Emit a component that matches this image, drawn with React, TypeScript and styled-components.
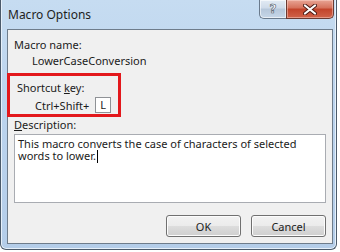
import React from "react";
import styled, { createGlobalStyle } from "styled-components";

const GlobalStyle = createGlobalStyle`
  html, body {
    margin: 0;
    padding: 0;
    background: #ffffff;
  }
  body {
    width: 340px;
    height: 252px;
    overflow: hidden;
    font-family: "Noto Sans", "Open Sans", sans-serif;
    font-size: 11px;
    color: #1b1b1b;
  }
`;

const App = () => {
  return (
    <>
      <GlobalStyle />
      <Frame>
        <TitleBar>
          <Title>Macro Options</Title>
          <CaptionButtons>
            <HelpBtn aria-label="Help">?</HelpBtn>
            <CloseBtn aria-label="Close">
              <svg width="14" height="11" viewBox="0 0 14 11">
                <path
                  d="M2 1.5 L12 9.5 M12 1.5 L2 9.5"
                  stroke="#4a1a14"
                  strokeWidth="4"
                  strokeLinecap="round"
                />
                <path
                  d="M2 1.5 L12 9.5 M12 1.5 L2 9.5"
                  stroke="#ffffff"
                  strokeWidth="2.2"
                  strokeLinecap="round"
                />
              </svg>
            </CloseBtn>
          </CaptionButtons>
        </TitleBar>
        <Client>
          <Label>Macro name:</Label>
          <Value>LowerCaseConversion</Value>
          <Highlight>
            <Label>
              Shortcut <u>k</u>ey:
            </Label>
            <KeyRow>
              <span>Ctrl+Shift+</span>
              <KeyInput>L</KeyInput>
            </KeyRow>
          </Highlight>
          <DescLabel>
            <u>D</u>escription:
          </DescLabel>
          <DescBox>
            This macro converts the case of characters of selected words to
            lower.<Caret />
          </DescBox>
          <ButtonRow>
            <DialogButton>OK</DialogButton>
            <DialogButton>Cancel</DialogButton>
          </ButtonRow>
        </Client>
      </Frame>
    </>
  );
};

/** Window styles */
const Frame = styled.div`
  width: 337px;
  height: 250px;
  box-sizing: border-box;
  padding: 0 3px 5px 6px;
  display: flex;
  flex-direction: column;
  background: linear-gradient(#c6dcf1, #bcd4ee 40%, #b4cde9);
  border: 1px solid #4b5a6b;
  border-top: none;
  border-radius: 0 0 6px 6px;
  box-shadow: inset 1px 0 0 #e6f0fa, inset -1px 0 0 #e6f0fa,
    inset 0 -1px 0 #e6f0fa;
`;

const TitleBar = styled.div`
  height: 29px;
  display: flex;
  align-items: flex-start;
  justify-content: space-between;
`;

const Title = styled.div`
  margin-top: 7px;
  margin-left: 1px;
  font-size: 12px;
  line-height: 16px;
  color: #1e1e1e;
`;

const CaptionButtons = styled.div`
  display: flex;
  height: 19px;
  margin-right: -1px;
`;

const HelpBtn = styled.div`
  width: 27px;
  height: 19px;
  box-sizing: border-box;
  border: 1px solid #6a7a8c;
  border-top: none;
  border-right: none;
  border-radius: 0 0 0 5px;
  background: linear-gradient(#e3ebf4, #cfdbe9 45%, #b6c7da 50%, #c6d6e8);
  box-shadow: inset 0 0 0 1px rgba(255, 255, 255, 0.6);
  display: flex;
  align-items: center;
  justify-content: center;
  font-family: "DejaVu Sans", sans-serif;
  font-weight: bold;
  font-size: 12px;
  color: #ffffff;
  -webkit-text-stroke: 0.6px #4c5866;
`;

const CloseBtn = styled.div`
  width: 48px;
  height: 19px;
  box-sizing: border-box;
  border: 1px solid #6a3a32;
  border-top: none;
  border-radius: 0 0 5px 0;
  background: linear-gradient(#e8a595, #d5705a 45%, #c2432a 50%, #d0634a);
  box-shadow: inset 0 0 0 1px rgba(255, 220, 210, 0.45);
  display: flex;
  align-items: center;
  justify-content: center;
`;

const Client = styled.div`
  flex: 1;
  display: flex;
  flex-direction: column;
  background: #f0f0f0;
  border: 1px solid #6e7c8b;
  padding: 0 6px 0 6px;
`;

/** Content styles */
const Label = styled.div`
  line-height: 15px;
  margin-top: 7px;
`;

const Value = styled.div`
  line-height: 15px;
  margin: 0 0 0 18px;
  height: 20px;
  padding-top: 1px;
`;

const Highlight = styled.div`
  width: 114px;
  height: 44px;
  box-sizing: border-box;
  margin-left: -7px;
  padding: 0 0 0 6px;
  border: 3px solid #e3181c;
  display: flex;
  flex-direction: column;

  ${Label} {
    margin-top: 4px;
    margin-left: 1px;
  }
`;

const KeyRow = styled.div`
  display: flex;
  align-items: center;
  gap: 6px;
  margin: 2px 0 0 19px;
  line-height: 15px;
`;

const KeyInput = styled.div`
  width: 16px;
  height: 16px;
  box-sizing: border-box;
  border: 1px solid #8f9296;
  background: #ffffff;
  padding-left: 4px;
  line-height: 14px;
`;

const DescLabel = styled.div`
  line-height: 15px;
  margin-top: 0;
  height: 17px;
`;

const DescBox = styled.div`
  height: 69px;
  box-sizing: border-box;
  border: 1px solid #a9acb2;
  background: #ffffff;
  padding: 3px 3px;
  line-height: 12px;
  width: 312px;
`;

const Caret = styled.span`
  display: inline-block;
  width: 1px;
  height: 13px;
  background: #000000;
  vertical-align: -3px;
  margin-left: 1px;
`;

const ButtonRow = styled.div`
  display: flex;
  justify-content: flex-end;
  gap: 10px;
  margin-top: 12px;
  padding-right: 0;
`;

const DialogButton = styled.div`
  width: 75px;
  height: 22px;
  box-sizing: border-box;
  border: 1px solid #707070;
  border-radius: 3px;
  background: linear-gradient(#f2f2f2, #ebebeb 50%, #dddddd 50%, #cfcfcf);
  box-shadow: inset 0 0 0 1px #fcfcfc;
  display: flex;
  align-items: center;
  justify-content: center;
  color: #1b1b1b;
`;

/** Exports */
export default App;
